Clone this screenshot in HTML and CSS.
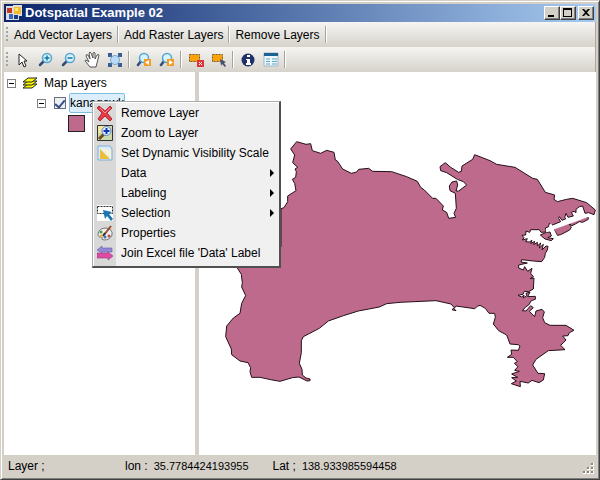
FILE: index.html
```html
<!DOCTYPE html>
<html lang="en">
<head>
<meta charset="utf-8">
<title>Dotspatial Example 02</title>
<link rel="stylesheet" href="styles.css">
</head>
<body>
<div class="window">
  <header class="titlebar">
    <svg class="icon" viewBox="0 0 16 16"><path fill="#ddd" d="M0 1h7v-1h9v11h-3v4H0z"/><path fill="#c83a20" d="M1 3h5v5H1z"/><path fill="#f2bd28" d="M8 2h7v7H8z"/><path fill="#3769c7" d="M3 9h4v5H3z"/><path fill="#173d85" d="M8 10h4v4H8z"/><path fill="#ffe574" d="M9 3h3v3H9z"/></svg>
    <h1>Dotspatial Example 02</h1>
    <div class="captions">
      <button aria-label="Minimize"><svg viewBox="0 0 14 12"><path d="M3 8h6v2H3z"/></svg></button>
      <button aria-label="Maximize"><svg viewBox="0 0 14 12"><path fill-rule="evenodd" d="M2 1h9v9H2zM3 3v6h7V3z"/></svg></button>
      <button class="close" aria-label="Close"><svg viewBox="0 0 14 12"><path d="M3 2h2l2 2 2-2h2L8 5.500l3 3.500H9L7 7 5 9H3l3-3.500z"/></svg></button>
    </div>
  </header>
  <nav class="toolbar">
    <span class="grip"></span>
    <button class="text">Add Vector Layers</button><i class="sep"></i>
    <button class="text">Add Raster Layers</button><i class="sep"></i>
    <button class="text">Remove Layers</button><i class="sep"></i>
  </nav>
  <nav class="toolbar">
    <span class="grip"></span>
    <button class="tool" aria-label="Select"><svg class="icon" viewBox="0 0 16 16"><path d="M4 2v11l3-3 2 5 2-1-2-5h3z" fill="#fff" stroke="#222"/></svg></button>
    <button class="tool" aria-label="Zoom in"><svg class="icon" viewBox="0 0 16 16"><path d="M6 9l-4 4" stroke="#344c78" stroke-width="2.500" stroke-linecap="round"/><circle cx="9" cy="6" r="4.500" fill="#d9f2fc" stroke="#54a5d0" stroke-width="1.500"/><path d="M6.500 6h5M9 3.500v5" stroke="#17769f" stroke-width="1.500"/></svg></button>
    <button class="tool" aria-label="Zoom out"><svg class="icon" viewBox="0 0 16 16"><path d="M6 9l-4 4" stroke="#344c78" stroke-width="2.500" stroke-linecap="round"/><circle cx="9" cy="6" r="4.500" fill="#d9f2fc" stroke="#54a5d0" stroke-width="1.500"/><path d="M6.500 6h5" stroke="#17769f" stroke-width="1.500"/></svg></button>
    <button class="tool" aria-label="Pan"><svg class="icon" viewBox="0 0 16 16"><path d="M6 15L2 10Q0 8 2 8l3 2-3-6q0-2 2-1l2 4-1-6q1-2 2 0l2 5V1q1-1 2 0v6l2-4q1-1 2 0l-2 8-1 4z" fill="#fff" stroke="#444" stroke-width=".9"/></svg></button>
    <button class="tool" aria-label="Full extent"><svg class="icon" viewBox="0 0 16 16"><path d="M2 2l12 12M14 2L2 14" stroke="#385e91" stroke-width="2"/><path d="M2 5V2h3M11 2h3v3M2 11v3h3M11 14h3v-3" fill="none" stroke="#385e91" stroke-width="2"/><circle cx="8" cy="8" r="4.500" fill="#b9dcf4" stroke="#76a8d3"/></svg></button>
    <i class="sep"></i>
    <button class="tool" aria-label="Previous extent"><svg class="icon" viewBox="0 0 16 16"><path d="M5 9l-3 4" stroke="#344c78" stroke-width="2.500" stroke-linecap="round"/><circle cx="8" cy="6" r="4.500" fill="#d9f2fc" stroke="#54a5d0" stroke-width="1.500"/><path d="M8 7h7v7H8z" fill="#f59a22"/><path d="M13 8v5l-4-2.500z" fill="#fff"/></svg></button>
    <button class="tool" aria-label="Next extent"><svg class="icon" viewBox="0 0 16 16"><path d="M5 9l-3 4" stroke="#344c78" stroke-width="2.500" stroke-linecap="round"/><circle cx="8" cy="6" r="4.500" fill="#d9f2fc" stroke="#54a5d0" stroke-width="1.500"/><path d="M8 7h7v7H8z" fill="#f59a22"/><path d="M10 8v5l4-2.500z" fill="#fff"/></svg></button>
    <i class="sep"></i>
    <button class="tool" aria-label="Clear selection"><svg class="icon" viewBox="0 0 16 16"><path d="M1.500 2.500h10v7h-10z" fill="#fca308" stroke="#7b5826" stroke-dasharray="2 1"/><path d="M9 8h7v7H9z" fill="#e0343b"/><path d="M11 10l3 3M14 10l-3 3" stroke="#fff"/></svg></button>
    <button class="tool" aria-label="Select features"><svg class="icon" viewBox="0 0 16 16"><path d="M1.500 2.500h10v7h-10z" fill="#fca308" stroke="#7b5826" stroke-dasharray="2 1"/><path d="M9 7l6 3-2 1 2 3-1 1-3-3-1 2z" fill="#47536f"/></svg></button>
    <i class="sep"></i>
    <button class="tool" aria-label="Identify"><svg class="icon" viewBox="0 0 16 16"><circle cx="8" cy="8" r="6.500" fill="#21306b"/><path d="M7 3h3v2H7zM6 7h4v4h1v2H6v-2h1V8H6z" fill="#fff"/></svg></button>
    <button class="tool" aria-label="Attribute table"><svg class="icon" viewBox="0 0 16 16"><path d="M1 1h14v13H1z" fill="#edf7fb" stroke="#a3b9c4"/><path d="M1 1h14v3H1z" fill="#1e6292"/><path d="M3 7h4M9 7h5M3 9.500h4M9 9.500h5M3 12h4M9 12h5" stroke="#5ba7c5"/></svg></button>
    <i class="sep"></i>
  </nav>
  <main class="workspace">
    <aside class="legend">
      <div class="row root">
        <button class="expander" aria-label="Collapse Map Layers"></button>
        <svg class="icon" viewBox="0 0 16 16"><g fill="#ff0" stroke="#222"><path d="M1 13l5-4h9l-5 4z"/><path d="M1 10l5-4h9l-5 4z"/><path d="M1 7l5-4h9l-5 4z"/></g></svg>
        <span>Map Layers</span>
      </div>
      <div class="row layer">
        <button class="expander" aria-label="Collapse layer"></button>
        <input type="checkbox" id="layer" checked>
        <label for="layer">kanagawk</label>
      </div>
      <div class="swatch"></div>
      <div class="menu" role="menu">
        <button role="menuitem"><svg class="icon" viewBox="0 0 16 16"><path d="M2 1l6 5 5-5 2 2-5 5 5 6-2 2-5-5-5 5-2-2 4-6-5-5z" fill="#e63b45" stroke="#b42736"/><path d="M3 3l5 5 5-5" fill="none" stroke="#ff8f8f"/></svg><span>Remove Layer</span></button>
        <button role="menuitem"><svg class="icon" viewBox="0 0 16 16"><path d="M.5.5h15v15H.5z" fill="#cbd9ac" stroke="#333"/><path d="M1 1h7v7H1z" fill="#f1e7a3"/><path d="M7 9l-5 5" stroke="#6f4e20" stroke-width="3"/><circle cx="9.500" cy="6" r="4.500" fill="#e4f0ff" stroke="#5a86bc"/><path d="M6.500 6h6M9.500 3v6" stroke="#1133b8" stroke-width="2"/></svg><span>Zoom to Layer</span></button>
        <button role="menuitem"><svg class="icon" viewBox="0 0 16 16"><path d="M1 1h12l2 3v11H1z" fill="#d8ebfb" stroke="#82afd5"/><path d="M3 14V4l10 10z" fill="#edbd35"/><path d="M3 3l11 11V5z" fill="#f5f2d8"/></svg><span>Set Dynamic Visibility Scale</span></button>
        <button role="menuitem" class="sub"><i class="icon"></i><span>Data</span></button>
        <button role="menuitem" class="sub"><i class="icon"></i><span>Labeling</span></button>
        <button role="menuitem" class="sub"><svg class="icon" viewBox="0 0 16 16"><path d="M0 0h16v16H0z" fill="#fff"/><path d="M.5 1.500h15v7H.5z" fill="none" stroke="#222" stroke-dasharray="2 1"/><path d="M6 5l9 2-3 2 4 5-2 2-4-5-2 3z" fill="#1877b4"/></svg><span>Selection</span></button>
        <button role="menuitem"><svg class="icon" viewBox="0 0 16 16"><path d="M1 9q1-6 8-6 7 1 6 7-2 5-8 5-3 0-2-3-4 1-4-3" fill="#eee" stroke="#777"/><circle cx="4" cy="7" r="1.500" fill="#429f42"/><circle cx="4" cy="11" r="1.500" fill="#e5b62d"/><circle cx="8" cy="12" r="1.500" fill="#3674cc"/><circle cx="12" cy="11" r="1.500" fill="#b64a41"/><path d="M14 1L7 10" stroke="#9a482a" stroke-width="2"/><path d="M8 8l-2 3" stroke="#333" stroke-width="2"/></svg><span>Properties</span></button>
        <button role="menuitem"><svg class="icon" viewBox="0 0 16 16"><path d="M0 5l5-4v2h10v4H5v1z" fill="#9588d7" stroke="#675bad" stroke-width=".6"/><path d="M16 11l-5 4v-2H0V8h11V7z" fill="#df4aa5" stroke="#963a78" stroke-width=".6"/></svg><span>Join Excel file 'Data' Label</span></button>
      </div>
    </aside>
    <div class="splitter"></div>
    <section class="map" aria-label="Map">
      <svg viewBox="597 216 1191 1149" preserveAspectRatio="xMinYMin meet">
        <g fill="#be6a8c" stroke="#241018" stroke-width="3" stroke-linejoin="round">
          <path d="M843 626L852 623 863 605 863 588 888 572 884 550 877 538 887 532 889 515 885 507 893 502 878 488 884 465 872 447 890 425 918 433 932 431 937 452 962 460 980 451 1002 457 1006 480 1012 483 1028 507 1054 520 1070 516 1076 508 1106 505 1118 514 1175 515 1220 530 1252 544 1262 562 1273 570 1298 595 1308 595 1330 618 1327 630 1340 637 1346 655 1367 652 1362 640 1369 625 1366 580 1350 572 1348 558 1356 546 1370 543 1373 555 1368 573 1376 573 1400 555 1390 545 1372 538 1340 518 1322 512 1320 500 1336 488 1352 502 1376 517 1384 514 1386 498 1418 478 1424 464 1470 482 1490 493 1545 502 1598 535 1612 538 1636 577 1664 585 1662 598 1672 605 1700 598 1718 595 1760 608 1786 630 1782 644 1766 638 1755 640 1748 618 1738 620 1728 628 1728 638 1722 634 1714 637 1720 648 1704 652 1698 640 1694 652 1698 656 1686 661 1678 650 1676 655 1682 665 1652 677 1648 670 1646 680 1636 684 1638 696 1623 697 1618 689 1592 689 1589 697 1578 693 1577 705 1566 706 1572 713 1567 720 1582 716 1577 725 1588 726 1596 721 1592 731 1604 724 1601 734 1612 727 1612 738 1622 729 1618 744 1630 733 1626 750 1638 738 1644 739 1642 750 1636 760 1634 772 1625 785 1600 783 1565 779 1563 786 1582 789 1556 795 1556 804 1570 810 1574 800 1583 814 1596 805 1592 820 1600 830 1590 836 1602 834 1600 867 1586 875 1573 874 1569 883 1554 886 1565 891 1572 885 1570 894 1580 887 1578 880 1590 876 1583 890 1606 889 1606 898 1594 902 1586 915 1578 920 1567 932 1578 933 1592 917 1600 923 1588 934 1604 950 1608 933 1626 928 1633 936 1628 953 1634 968 1650 976 1698 976 1722 991 1708 998 1704 1007 1688 1008 1698 1020 1682 1036 1695 1049 1645 1052 1608 1078 1598 1095 1614 1120 1634 1121 1630 1140 1617 1148 1596 1141 1585 1149 1560 1144 1561 1160 1534 1151 1549 1143 1535 1133 1553 1132 1535 1122 1558 1114 1544 1111 1554 1100 1543 1090 1552 1085 1540 1072 1522 1072 1535 1063 1533 1050 1555 1051 1560 1038 1555 1034 1530 1032 1520 1005 1496 992 1480 972 1486 952 1484 940 1467 940 1456 925 1440 916 1432 919 1424 926 1368 918 1362 926 1368 932 1356 929 1363 923 1353 912 1308 902 1200 907 1160 911 1138 921 1075 933 1030 947 985 963 958 985 910 1010 904 1022 904 1058 898 1090 906 1108 907 1125 918 1134 930 1137 930 1142 921 1143 897 1131 877 1133 840 1144 812 1139 780 1132 755 1132 750 1115 752 1103 744 1088 720 1083 695 1064 694 1047 677 1010 680 978 700 954 720 940 725 910 737 887 725 861 727 848 724 823 710 801V740H843z"/>
          <path d="M1661 687L1706 670 1714 682 1709 690 1682 704 1672 706z"/>
          <path d="M1621 705L1639 697 1650 696 1654 708 1643 713 1660 716 1654 722 1635 717z"/>
          <path d="M1706 670L1742 656 1764 651 1765 658 1748 667 1738 665 1726 672 1716 677z"/>
        </g>
        <path d="M1637 687L1757 641 1765 651 1639 697z" fill="#fff"/>
        <path d="M1648 674L1654 671 1670 706 1663 709z" fill="#fff"/>
      </svg>
    </section>
  </main>
  <footer class="status"><span class="layer-status">Layer ;</span><span>lon :</span><span class="value">35.7784424193955</span><span>Lat ;</span><span class="value">138.933985594458</span>
    <svg class="resize" viewBox="0 0 12 12"><g fill="#fff"><path d="M9 1h3v3H9zM5 5h3v3H5zM9 5h3v3H9zM1 9h3v3H1zM5 9h3v3H5zM9 9h3v3H9z"/></g><g fill="#87847c"><path d="M9 1h2v2H9zM5 5h2v2H5zM9 5h2v2H9zM1 9h2v2H1zM5 9h2v2H5zM9 9h2v2H9z"/></g></svg>
  </footer>
</div>
</body>
</html>
```

FILE: styles.css
```css
* { box-sizing: border-box; }
body { margin: 0; font: 12px/16px "Liberation Sans", Arial, sans-serif; color: #000; }
button { font: inherit; color: inherit; border: 0; padding: 0; background: none; }
svg { display: block; }
.icon { width: 16px; height: 16px; flex: none; }
.window {
  height: 100vh; display: flex; flex-direction: column; background: #d4d0c8;
  border: 1px solid #d4d0c8; border-right-color: #404040; border-bottom-color: #404040;
  box-shadow: inset 1px 1px #fff, inset -1px -1px #808080; padding: 3px;
}
.titlebar {
  height: 18px; flex: none; display: flex; align-items: center; gap: 3px; padding: 0 2px;
  color: #fff; background: linear-gradient(90deg, #0a246a, #a6caf0);
}
h1 { flex: 1; margin: 0; font-size: 13px; line-height: 16px; }
.captions { display: flex; }
.captions button {
  width: 16px; height: 14px; background: #d4d0c8; border: 1px solid #fff;
  border-right-color: #404040; border-bottom-color: #404040; box-shadow: inset -1px -1px #808080;
}
.captions .close { margin-left: 2px; }
.captions svg { width: 14px; height: 12px; }
.toolbar {
  height: 25px; flex: none; display: flex; align-items: center; padding-left: 2px;
  background: linear-gradient(#f6f5f3, #d6d3cb); border-right: 1px solid #aaa79f;
}
.grip { width: 2px; height: 16px; margin-right: 3px; background: repeating-linear-gradient(#a5a29a 0 2px, transparent 2px 4px); }
.text { padding: 0 3px; white-space: nowrap; }
.tool { width: 23px; display: flex; justify-content: center; }
.sep { width: 2px; height: 17px; margin: 0 2px; background: #a6a39b; border-right: 1px solid #fff; }
.workspace { flex: 1; min-height: 0; display: flex; }
.legend { position: relative; width: 191px; flex: none; background: #fff; padding-top: 1px; }
.row { display: flex; align-items: center; height: 20px; }
.root { padding-left: 3px; gap: 6px; }
.layer { padding-left: 33px; }
.expander { width: 9px; height: 9px; flex: none; border: 1px solid #808080; background: linear-gradient(#000, #000) center / 5px 1px no-repeat #fff; }
.layer input {
  appearance: none; width: 12px; height: 12px; margin: 0 3px 0 8px; border: 1px solid #64717d;
  background: #edf0f2; display: grid; place-items: center;
}
.layer input:checked::before { content: ""; width: 4px; height: 8px; border: solid #394f88; border-width: 0 2px 2px 0; transform: rotate(40deg); }
.layer label { padding: 1px 0; border: 1px solid #7ebce3; border-radius: 2px; background: #dceefb; }
.swatch { width: 17px; height: 17px; margin: 2px 0 0 64px; background: #be6a8c; border: 1px solid #222; }
.splitter { width: 4px; flex: none; background: #d4d0c8; }
.map { flex: 1; min-width: 0; background: #fff; }
.map svg { width: 100%; height: 100%; }
.menu {
  position: absolute; z-index: 1; top: 29px; left: 88px; width: 189px; padding: 1px 1px 3px;
  background: linear-gradient(90deg, #d8d8d8 23px, #f0f0f0 23px); border: 1px solid #aaa;
  border-right: 2px solid #505050; border-bottom: 2px solid #505050; box-shadow: inset 1px 1px #fff;
}
.menu button { width: 100%; height: 20px; display: flex; align-items: center; gap: 8px; padding: 0 4px 0 3px; text-align: left; white-space: nowrap; }
.menu span { flex: 1; }
.sub::after { content: ""; border: solid transparent; border-width: 4px 0 4px 4px; border-left-color: #000; }
.status { height: 21px; flex: none; display: flex; align-items: center; padding-left: 4px; }
.layer-status { width: 117px; }
.value { margin: 0 24px 0 6px; font-size: 11px; }
.resize { width: 12px; height: 12px; margin: 5px 2px 0 auto; }
```
